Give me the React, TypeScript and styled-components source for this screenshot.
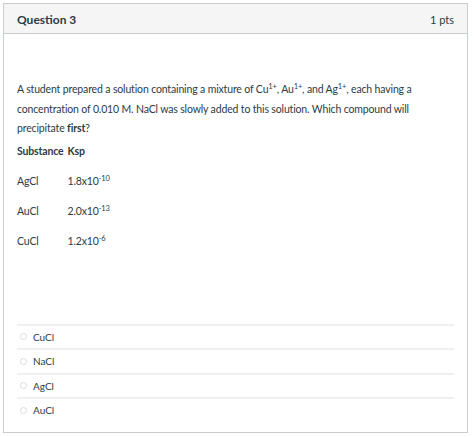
import React from 'react';
import styled, {createGlobalStyle} from "styled-components";

const GlobalStyle = createGlobalStyle`
  body {
    margin: 0;
    background: #fff;
    font-family: Lato, "Open Sans", sans-serif;
    color: #2d3b45;
  }
`

function App() {
    const rows = [
        {name: "AgCl", base: "1.8x10", exp: "-10"},
        {name: "AuCl", base: "2.0x10", exp: "-13"},
        {name: "CuCl", base: "1.2x10", exp: "-6"},
    ]
    const answers = ["CuCl", "NaCl", "AgCl", "AuCl"]

    return (
        <>
            <GlobalStyle/>
            <Card>
                <Header>
                    <Title>Question 3</Title>
                    <Points>1 pts</Points>
                </Header>
                <Body>
                    <Text>
                        A student prepared a solution containing a mixture of Cu<sup>1+</sup>, Au<sup>1+</sup>, and Ag<sup>1+</sup>, each having a<br/>
                        concentration of 0.010 M. NaCl was slowly added to this solution. Which compound will<br/>
                        precipitate <b>first</b>?
                    </Text>
                    <Table>
                        <thead>
                        <tr>
                            <th>Substance</th>
                            <th>Ksp</th>
                        </tr>
                        </thead>
                        <tbody>
                        {rows.map(r => (
                            <tr key={r.name}>
                                <td>{r.name}</td>
                                <td>{r.base}<sup>{r.exp}</sup></td>
                            </tr>
                        ))}
                        </tbody>
                    </Table>
                    <Answers>
                        {answers.map(a => (
                            <Answer key={a}>
                                <Radio/>
                                <span>{a}</span>
                            </Answer>
                        ))}
                    </Answers>
                </Body>
            </Card>
        </>
    );
}

const Card = styled.div`
  margin: 3px 0 0 3px;
  width: 463px;
  height: 428px;
  border: 1px solid #c7cdd1;
  box-sizing: content-box;
  display: flex;
  flex-direction: column;
  overflow: hidden;
`

const Header = styled.div`
  flex-shrink: 0;
  height: 28px;
  background: #f5f5f5;
  border-bottom: 1px solid #c7cdd1;
  display: flex;
  align-items: center;
  justify-content: space-between;
  padding: 1px 13px 0;
`

const Title = styled.div`
  font-size: 12px;
  font-weight: 700;
`

const Points = styled.div`
  font-size: 11px;
`

const Body = styled.div`
  padding: 46px 13px 0;
`

const Text = styled.p`
  margin: 0;
  font-size: 10.5px;
  letter-spacing: -0.15px;
  line-height: 19.5px;
  white-space: nowrap;

  sup {
    font-size: 7.5px;
    line-height: 0;
  }

  b {
    font-weight: 700;
  }
`

const Table = styled.table`
  margin-top: -3px;
  border-collapse: collapse;
  font-size: 10.5px;
  letter-spacing: -0.15px;

  th {
    text-align: left;
    font-weight: 700;
    padding: 0;
    height: 30px;
  }

  td {
    padding: 0;
    height: 30px;
    vertical-align: middle;
  }

  th:first-child, td:first-child {
    width: 46px;
    padding-right: 4px;
  }

  sup {
    font-size: 7.5px;
    line-height: 0;
  }
`

const Answers = styled.div`
  margin-top: 68px;
`

const Answer = styled.div`
  height: 24.5px;
  border-top: 2px solid #f0f0f0;
  display: flex;
  align-items: center;
  gap: 6px;
  padding-left: 3px;
  font-size: 10px;
  box-sizing: border-box;
`

const Radio = styled.span`
  width: 5px;
  height: 5px;
  border-radius: 50%;
  border: 1px solid #dcdcdc;
  display: inline-block;
`

export default App;
